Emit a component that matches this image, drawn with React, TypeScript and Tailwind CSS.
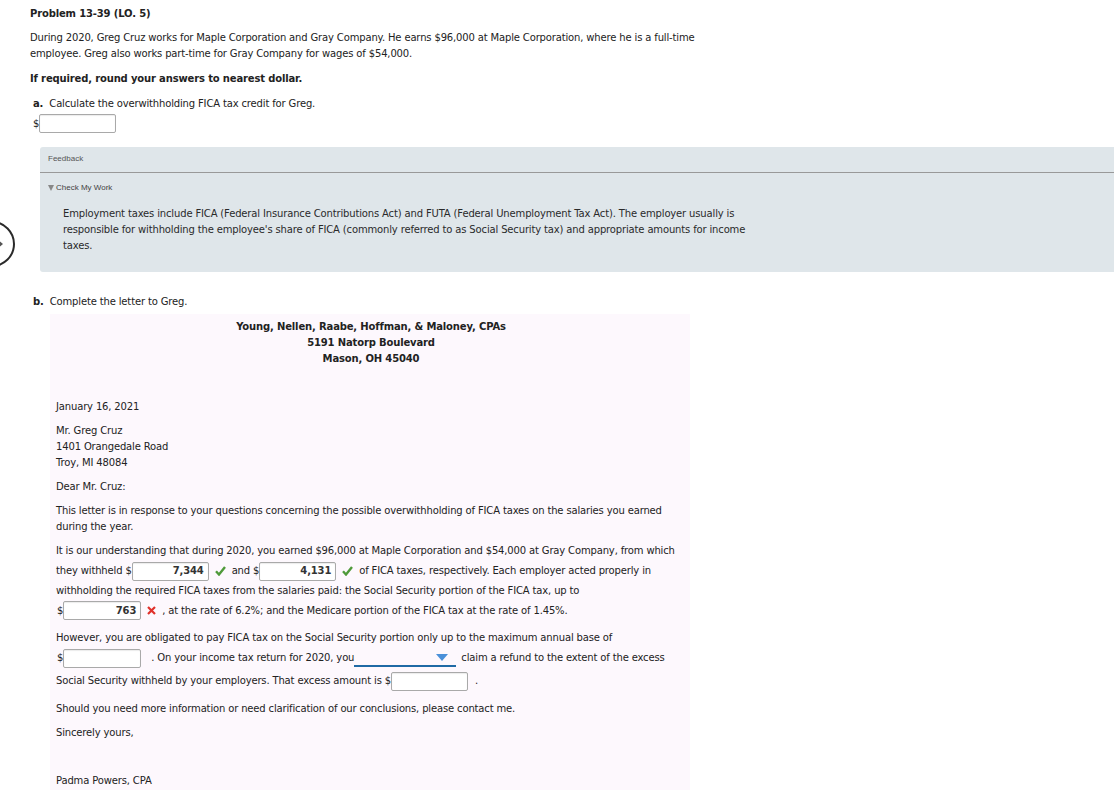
import React from 'react';

const font = { fontFamily: '"DejaVu Sans", Verdana, sans-serif', letterSpacing: '-0.15px' };

const Check = () => (
  <svg width="11" height="10" viewBox="0 0 11 10" className="mx-[6px]">
    <path d="M1 5.2 L4 8.5 L10 1" fill="none" stroke="#4f9a3a" strokeWidth="2.4" />
  </svg>
);

const Cross = () => (
  <svg width="9" height="9" viewBox="0 0 9 9" className="mx-[6px]">
    <path d="M1 1 L8 8 M8 1 L1 8" fill="none" stroke="#e0312b" strokeWidth="2.2" />
  </svg>
);

const Box = ({ value, w = 'w-[78px]' }: { value?: string; w?: string }) => (
  <span
    className={`inline-flex items-center justify-end ${w} h-[19px] bg-white border border-[#a9a9a9] rounded-[2px] pr-[4px] font-bold text-[#333] shadow-[inset_0_1px_1px_rgba(0,0,0,0.08)]`}
  >
    {value}
  </span>
);

export default function App() {
  return (
    <div
      className="relative w-[1114px] h-[790px] overflow-hidden bg-white text-[10px] leading-[16px] text-[#222]"
      style={font}
    >
      {/* side nav circle */}
      <div className="absolute left-[-31px] top-[221px] w-[46px] h-[46px] rounded-full border-2 border-[#2a2a2a] flex items-center justify-end pr-[9px]">
        <svg width="6" height="8" viewBox="0 0 6 8">
          <path d="M0 0 L5 4 L0 8 Z" fill="#555" />
        </svg>
      </div>

      <div className="pl-[30px] pt-[6px]">
        <div className="font-bold">Problem 13-39 (LO. 5)</div>
        <p className="mt-[8px]">
          During 2020, Greg Cruz works for Maple Corporation and Gray Company. He earns $96,000 at Maple Corporation, where he is a full-time
          <br />
          employee. Greg also works part-time for Gray Company for wages of $54,000.
        </p>
        <div className="mt-[9px] font-bold">If required, round your answers to nearest dollar.</div>
        <div className="mt-[9px] pl-[3px]">
          <span className="font-bold">a.</span>&nbsp; Calculate the overwithholding FICA tax credit for Greg.
        </div>
        <div className="mt-[2px] pl-[3px] flex items-center">
          <span>$</span>
          <Box w="w-[77px]" />
        </div>

        {/* feedback */}
        <div className="mt-[14px] ml-[10px] w-[1090px] bg-[#dfe6ea] rounded-[3px] pb-[18px]">
          <div
            className="h-[26px] pl-[8px] pt-[7px] text-[8px] leading-[10px] text-[#555] border-b border-[#999]"
            style={{ fontFamily: '"Liberation Sans", Arial, sans-serif', letterSpacing: '0' }}
          >
            Feedback
          </div>
          <div
            className="mt-[10px] pl-[8px] flex items-center text-[8px] leading-[10px] text-[#444]"
            style={{ fontFamily: '"Liberation Sans", Arial, sans-serif', letterSpacing: '0' }}
          >
            <svg width="6" height="6" viewBox="0 0 6 6" className="mr-[2px]">
              <path d="M0 0 L6 0 L3 6 Z" fill="#888" />
            </svg>
            Check My Work
          </div>
          <p className="mt-[13px] pl-[23px] text-[#2a2a2a]">
            Employment taxes include FICA (Federal Insurance Contributions Act) and FUTA (Federal Unemployment Tax Act). The employer usually is
            <br />
            responsible for withholding the employee's share of FICA (commonly referred to as Social Security tax) and appropriate amounts for income
            <br />
            taxes.
          </p>
        </div>

        <div className="mt-[22px] pl-[3px]">
          <span className="font-bold">b.</span>&nbsp; Complete the letter to Greg.
        </div>

        {/* letter */}
        <div className="mt-[4px] ml-[20px] w-[640px] h-[500px] bg-[#fdf8fd] pt-[5px] pl-[6px]">
          <div className="text-center font-bold pr-[4px]">
            <div>Young, Nellen, Raabe, Hoffman, &amp; Maloney, CPAs</div>
            <div>5191 Natorp Boulevard</div>
            <div>Mason, OH 45040</div>
          </div>

          <div className="mt-[32px]">January 16, 2021</div>
          <div className="mt-[8px]">
            <div>Mr. Greg Cruz</div>
            <div>1401 Orangedale Road</div>
            <div>Troy, MI 48084</div>
          </div>
          <div className="mt-[8px]">Dear Mr. Cruz:</div>
          <p className="mt-[8px]">
            This letter is in response to your questions concerning the possible overwithholding of FICA taxes on the salaries you earned
            <br />
            during the year.
          </p>

          <div className="mt-[6px]">
            <div className="h-[20px] flex items-center whitespace-nowrap">
              It is our understanding that during 2020, you earned $96,000 at Maple Corporation and $54,000 at Gray Company, from which
            </div>
            <div className="h-[20px] flex items-center whitespace-nowrap">
              <span>they withheld $</span>
              <Box value="7,344" w="w-[77px]" />
              <Check />
              <span>and $</span>
              <Box value="4,131" w="w-[77px]" />
              <Check />
              <span>of FICA taxes, respectively. Each employer acted properly in</span>
            </div>
            <div className="h-[20px] flex items-center whitespace-nowrap">
              withholding the required FICA taxes from the salaries paid: the Social Security portion of the FICA tax, up to
            </div>
            <div className="h-[19px] flex items-center pl-[1px] whitespace-nowrap">
              <span>$</span>
              <Box value="763" />
              <Cross />
              <span>, at the rate of 6.2%; and the Medicare portion of the FICA tax at the rate of 1.45%.</span>
            </div>
          </div>

          <div className="mt-[8px]">
            <div className="h-[20px] flex items-center whitespace-nowrap">
              However, you are obligated to pay FICA tax on the Social Security portion only up to the maximum annual base of
            </div>
            <div className="h-[20px] flex items-center pl-[1px] whitespace-nowrap">
              <span>$</span>
              <Box />
              <span className="ml-[10px]">. On your income tax return for 2020, you</span>
              <span className="ml-[0px] w-[102px] h-[17px] border-b-2 border-[#1f6aa5] flex items-center justify-end pr-[8px]">
                <svg width="12" height="7" viewBox="0 0 12 7">
                  <path d="M0 0 L12 0 L6 7 Z" fill="#4a90d9" />
                </svg>
              </span>
              <span className="ml-[5px]">claim a refund to the extent of the excess</span>
            </div>
            <div className="mt-[2px] h-[22px] flex items-center whitespace-nowrap">
              <span>Social Security withheld by your employers. That excess amount is $</span>
              <Box w="w-[77px]" />
              <span className="ml-[7px]">.</span>
            </div>
          </div>

          <div className="mt-[9px]">Should you need more information or need clarification of our conclusions, please contact me.</div>
          <div className="mt-[8px]">Sincerely yours,</div>
          <div className="mt-[32px]">Padma Powers, CPA</div>
        </div>
      </div>
    </div>
  );
}
